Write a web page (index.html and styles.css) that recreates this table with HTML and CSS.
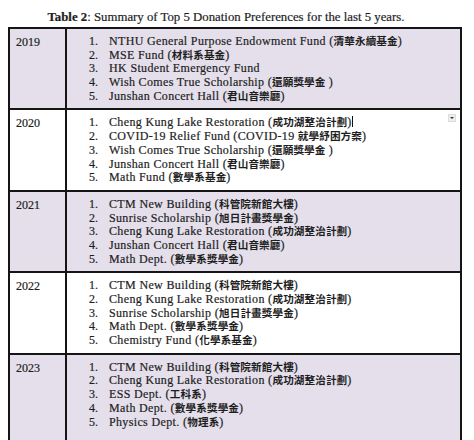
FILE: index.html
```html
<!DOCTYPE html>
<html>
<head>
<meta charset="utf-8">
<link rel="stylesheet" href="styles.css">
</head>
<body>
<div class="page">
  <div class="title"><b>Table 2</b>: Summary of Top 5 Donation Preferences for the last 5 years.</div>
  <table class="tbl">
    <tr class="shade">
      <td class="year">2019</td>
      <td class="items">
        <ol>
          <li><span class="n">1.</span><span>NTHU General Purpose Endowment Fund (<span class="zh">清華永續基金</span>)</span></li>
          <li><span class="n">2.</span><span>MSE Fund (<span class="zh">材料系基金</span>)</span></li>
          <li><span class="n">3.</span><span>HK Student Emergency Fund</span></li>
          <li><span class="n">4.</span><span>Wish Comes True Scholarship (<span class="zh">還願獎學金</span> )</span></li>
          <li><span class="n">5.</span><span>Junshan Concert Hall (<span class="zh">君山音樂廳</span>)</span></li>
        </ol>
      </td>
    </tr>
    <tr>
      <td class="year">2020</td>
      <td class="items">
        <span class="dd"></span>
        <ol>
          <li><span class="n">1.</span><span>Cheng Kung Lake Restoration (<span class="zh">成功湖整治計劃</span>)<span class="caret"></span></span></li>
          <li><span class="n">2.</span><span>COVID-19 Relief Fund (COVID-19 <span class="zh">就學紓困方案</span>)</span></li>
          <li><span class="n">3.</span><span>Wish Comes True Scholarship (<span class="zh">還願獎學金</span> )</span></li>
          <li><span class="n">4.</span><span>Junshan Concert Hall (<span class="zh">君山音樂廳</span>)</span></li>
          <li><span class="n">5.</span><span>Math Fund (<span class="zh">數學系基金</span>)</span></li>
        </ol>
      </td>
    </tr>
    <tr class="shade">
      <td class="year">2021</td>
      <td class="items">
        <ol>
          <li><span class="n">1.</span><span>CTM New Building (<span class="zh">科管院新館大樓</span>)</span></li>
          <li><span class="n">2.</span><span>Sunrise Scholarship (<span class="zh">旭日計畫獎學金</span>)</span></li>
          <li><span class="n">3.</span><span>Cheng Kung Lake Restoration (<span class="zh">成功湖整治計劃</span>)</span></li>
          <li><span class="n">4.</span><span>Junshan Concert Hall (<span class="zh">君山音樂廳</span>)</span></li>
          <li><span class="n">5.</span><span>Math Dept. (<span class="zh">數學系獎學金</span>)</span></li>
        </ol>
      </td>
    </tr>
    <tr>
      <td class="year">2022</td>
      <td class="items">
        <ol>
          <li><span class="n">1.</span><span>CTM New Building (<span class="zh">科管院新館大樓</span>)</span></li>
          <li><span class="n">2.</span><span>Cheng Kung Lake Restoration (<span class="zh">成功湖整治計劃</span>)</span></li>
          <li><span class="n">3.</span><span>Sunrise Scholarship (<span class="zh">旭日計畫獎學金</span>)</span></li>
          <li><span class="n">4.</span><span>Math Dept. (<span class="zh">數學系獎學金</span>)</span></li>
          <li><span class="n">5.</span><span>Chemistry Fund (<span class="zh">化學系基金</span>)</span></li>
        </ol>
      </td>
    </tr>
    <tr class="shade last">
      <td class="year">2023</td>
      <td class="items">
        <ol>
          <li><span class="n">1.</span><span>CTM New Building (<span class="zh">科管院新館大樓</span>)</span></li>
          <li><span class="n">2.</span><span>Cheng Kung Lake Restoration (<span class="zh">成功湖整治計劃</span>)</span></li>
          <li><span class="n">3.</span><span>ESS Dept. (<span class="zh">工科系</span>)</span></li>
          <li><span class="n">4.</span><span>Math Dept. (<span class="zh">數學系獎學金</span>)</span></li>
          <li><span class="n">5.</span><span>Physics Dept. (<span class="zh">物理系</span>)</span></li>
        </ol>
      </td>
    </tr>
  </table>
</div>
</body>
</html>
```
FILE: styles.css
```css
html, body {
  margin: 0;
  padding: 0;
  background: #ffffff;
}
body {
  font-family: "Liberation Serif", "Noto Sans CJK TC", serif;
  color: #1e1e1e;
  -webkit-text-stroke: 0.2px #1e1e1e;
}
.page {
  padding: 9px 0 0 8px;
}
.title {
  width: 436px;
  text-align: center;
  font-size: 12.8px;
  line-height: 16px;
  height: 18px;
}
.title b {
  font-weight: bold;
}
.tbl {
  border-collapse: collapse;
  width: 454px;
  border: 2px solid #151515;
}
.tbl td {
  border: 2px solid #151515;
  vertical-align: top;
  padding: 0;
}
.shade td {
  background: #e4dfeb;
}
.year {
  width: 49px;
  padding: 6px 0 0 6px !important;
  font-size: 12px;
  line-height: 14px;
}
.items {
  position: relative;
  padding: 6px 0 5px 22px !important;
}
.last .items {
  padding-bottom: 13px !important;
}
ol {
  list-style: none;
  margin: 0;
  padding: 0;
}
li {
  display: flex;
  font-size: 12px;
  letter-spacing: 0.35px;
  line-height: 13.7px;
  height: 13.7px;
  white-space: nowrap;
}
.n {
  width: 20px;
  flex: none;
  letter-spacing: 0;
}
.zh {
  font-family: "Noto Sans CJK TC", sans-serif;
  font-size: 10.6px;
  font-weight: bold;
  letter-spacing: 0.1px;
  line-height: 1;
  -webkit-text-stroke: 0;
}
.caret {
  display: inline-block;
  width: 1.5px;
  height: 11px;
  background: #111;
  vertical-align: -1px;
}
.dd {
  position: absolute;
  right: 4px;
  top: 4px;
  width: 6px;
  height: 6px;
  background: #eeeeee;
  border: 1px solid #dddddd;
}
.dd::after {
  content: "";
  position: absolute;
  left: 1px;
  top: 2px;
  border-left: 2px solid transparent;
  border-right: 2px solid transparent;
  border-top: 2px solid #333;
}
```
